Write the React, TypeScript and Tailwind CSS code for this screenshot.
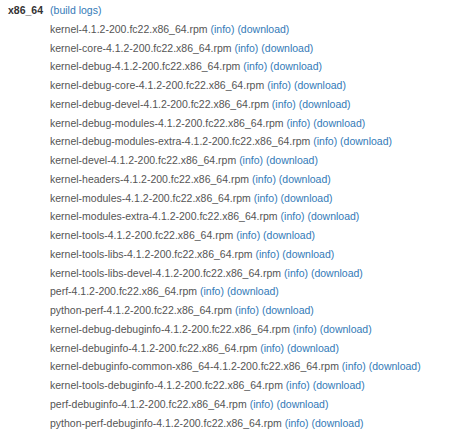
import React from "react";

const files = [
  "kernel-4.1.2-200.fc22.x86_64.rpm",
  "kernel-core-4.1.2-200.fc22.x86_64.rpm",
  "kernel-debug-4.1.2-200.fc22.x86_64.rpm",
  "kernel-debug-core-4.1.2-200.fc22.x86_64.rpm",
  "kernel-debug-devel-4.1.2-200.fc22.x86_64.rpm",
  "kernel-debug-modules-4.1.2-200.fc22.x86_64.rpm",
  "kernel-debug-modules-extra-4.1.2-200.fc22.x86_64.rpm",
  "kernel-devel-4.1.2-200.fc22.x86_64.rpm",
  "kernel-headers-4.1.2-200.fc22.x86_64.rpm",
  "kernel-modules-4.1.2-200.fc22.x86_64.rpm",
  "kernel-modules-extra-4.1.2-200.fc22.x86_64.rpm",
  "kernel-tools-4.1.2-200.fc22.x86_64.rpm",
  "kernel-tools-libs-4.1.2-200.fc22.x86_64.rpm",
  "kernel-tools-libs-devel-4.1.2-200.fc22.x86_64.rpm",
  "perf-4.1.2-200.fc22.x86_64.rpm",
  "python-perf-4.1.2-200.fc22.x86_64.rpm",
  "kernel-debug-debuginfo-4.1.2-200.fc22.x86_64.rpm",
  "kernel-debuginfo-4.1.2-200.fc22.x86_64.rpm",
  "kernel-debuginfo-common-x86_64-4.1.2-200.fc22.x86_64.rpm",
  "kernel-tools-debuginfo-4.1.2-200.fc22.x86_64.rpm",
  "perf-debuginfo-4.1.2-200.fc22.x86_64.rpm",
  "python-perf-debuginfo-4.1.2-200.fc22.x86_64.rpm",
];

export default function App() {
  return (
    <div className="bg-white w-[474px] h-[431px] overflow-hidden text-[10.5px] leading-[18.75px] text-[#555] font-['Liberation_Sans',Arial,sans-serif] pt-[1px] pl-[8px]">
      <div className="flex gap-[7px]">
        <span className="font-bold text-[#333]">x86_64</span>
        <a className="text-[#337ab7]">(build logs)</a>
      </div>
      <ul className="pl-[42px]">
        {files.map((f) => (
          <li key={f}>
            {f} <a className="text-[#337ab7]">(info)</a> <a className="text-[#337ab7]">(download)</a>
          </li>
        ))}
      </ul>
    </div>
  );
}
